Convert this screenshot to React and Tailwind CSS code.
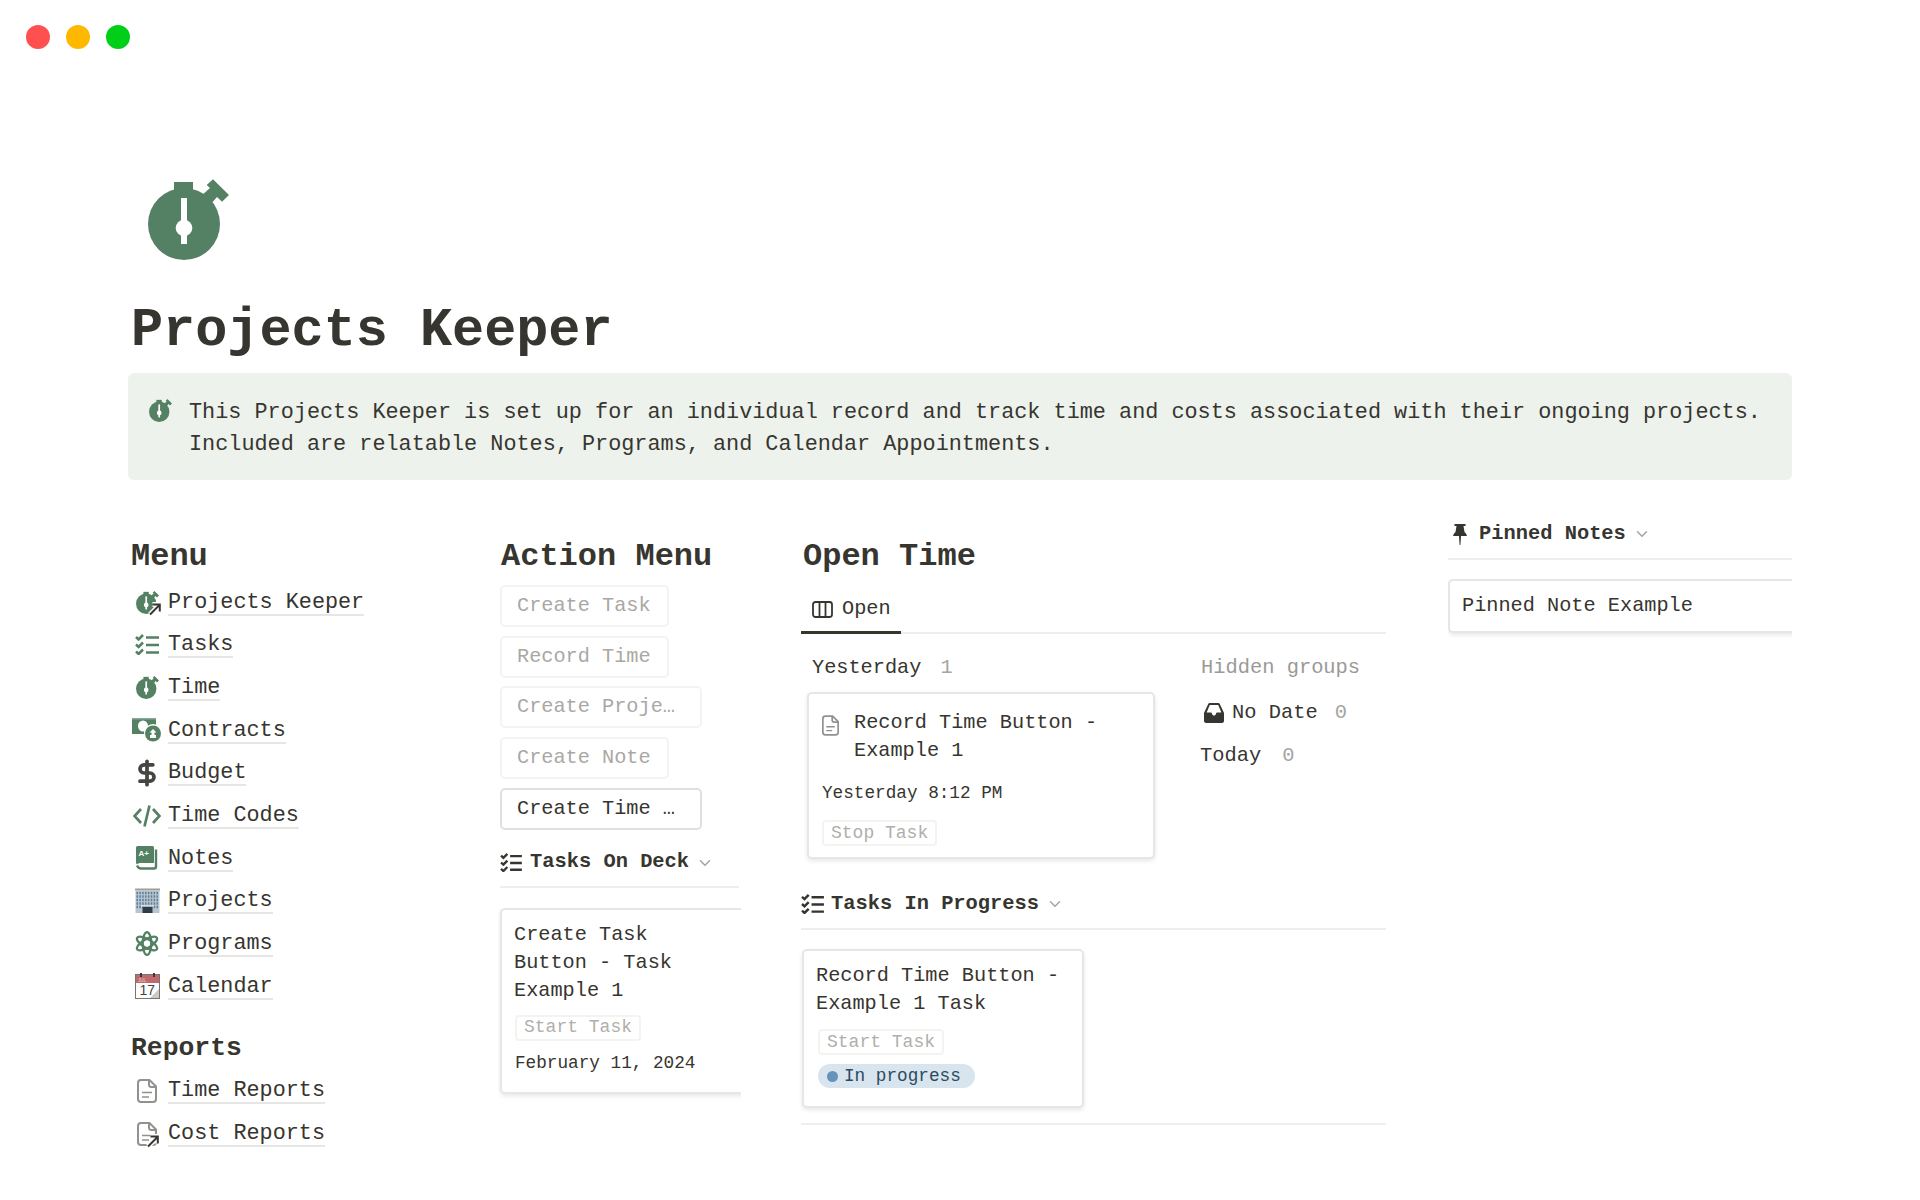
import React from "react";
import { ChevronDown, DollarSign } from "lucide-react";

const green = "#548164";

const Stopwatch = ({ size = 22, color = green, hole = "#fff" }) => (
  <svg width={size} height={size} viewBox="0 0 81 81" className="block">
    <circle cx="36" cy="45" r="36" fill={color} />
    <rect x="26" y="3" width="19" height="10" fill={color} />
    <polygon points="58.7,6 65,0.3 81,16 74,22.7 69,18 62,26 53,17 62,9" fill={color} />
    <rect x="33" y="19" width="6" height="46" fill={hole} />
    <circle cx="36" cy="49" r="8.3" fill={hole} />
  </svg>
);

const Arrow = ({ color = "#37352f" }) => (
  <svg width="14" height="14" viewBox="0 0 14 14" className="absolute right-[-3px] bottom-[-2px]">
    <path d="M2 12.5 L11.5 3 M4.5 2.5 H11.8 V9.5" fill="none" stroke="#fff" strokeWidth="5" />
    <path d="M2 12.5 L11.5 3 M4.5 2.5 H11.8 V9.5" fill="none" stroke={color} strokeWidth="2" />
  </svg>
);

const Checklist = ({ w = 24, h = 21, color = green }) => (
  <svg width={w} height={h} viewBox="0 0 24 21" fill="none" stroke={color} strokeWidth="2.6" className="block">
    <path d="M1 3 L3.6 5.4 L8 1 M1 10.5 L3.6 12.9 L8 8.5 M1 17.5 L3.6 19.9 L8 15.5" />
    <path d="M11 3.5 H24 M11 11 H24 M11 18.5 H24" />
  </svg>
);

const Money = () => (
  <svg width="30" height="24" viewBox="0 0 30 24" className="block">
    <rect x="0" y="0" width="24" height="16" fill={green} />
    <rect x="0" y="0" width="24" height="1.5" fill="#8aa897" />
    <ellipse cx="11" cy="8" rx="5" ry="5.5" fill="#fff" />
    <circle cx="21" cy="15" r="9" fill="#fff" />
    <circle cx="21" cy="15.5" r="8" fill={green} />
    <path d="M21 11 L24.5 14.5 H22.5 V17 H24 V20 H18 V17 H19.5 V14.5 H17.5 Z" fill="#fff" />
  </svg>
);

const CodeIcon = () => (
  <svg width="28" height="22" viewBox="0 0 28 22" fill="none" stroke={green} strokeWidth="2.7" className="block">
    <path d="M8 4 L1.5 11 L8 18 M20 4 L26.5 11 L20 18 M16.5 0.5 L11.5 21.5" />
  </svg>
);

const NotesIcon = () => (
  <svg width="22" height="24" viewBox="0 0 22 24" className="block">
    <path d="M1.5 0 H16.5 Q18 0 18 1.5 V17 H4 Q2 17 1 18.5 L0 17 V1.5 Q0 0 1.5 0 Z" fill={green} />
    <path d="M20 3.5 V20.5 Q20 22.5 18 22.5 H5 Q2.5 22.5 1 19.5" fill="none" stroke={green} strokeWidth="2.4" />
    <text x="2.6" y="9.5" fontSize="8" fontWeight="700" fill="#fff" fontFamily="Liberation Sans, sans-serif">A+</text>
  </svg>
);

const Building = () => {
  const rows = [0, 1, 2, 3, 4];
  const cols = [0, 1, 2, 3, 4, 5, 6, 7];
  return (
    <svg width="25" height="25" viewBox="0 0 25 25" className="block">
      <rect x="0" y="0.5" width="25" height="2" fill="#a09d93" />
      <rect x="0.5" y="2.5" width="24" height="22.5" fill="#b7c6d2" />
      {rows.map((r) =>
        cols.map((c) => <rect key={r + "-" + c} x={1.5 + c * 2.85} y={3.8 + r * 3.5} width="1.5" height="2.4" fill="#5f7d96" />)
      )}
      <rect x="7.5" y="18.5" width="10" height="6.5" fill="#2f3d49" />
      <rect x="6" y="17.3" width="13" height="1.3" fill="#e3e7ea" />
    </svg>
  );
};

const Atom = () => (
  <svg width="24" height="25" viewBox="0 0 24 25" fill="none" stroke={green} strokeWidth="2.3" className="block">
    <ellipse cx="12" cy="12.5" rx="4.3" ry="11.4" />
    <ellipse cx="12" cy="12.5" rx="4.3" ry="11.4" transform="rotate(60 12 12.5)" />
    <ellipse cx="12" cy="12.5" rx="4.3" ry="11.4" transform="rotate(-60 12 12.5)" />
  </svg>
);

const CalendarIcon = () => (
  <svg width="25" height="26" viewBox="0 0 25 26" className="block">
    <rect x="0.5" y="1.5" width="24" height="24" fill="#fff" stroke="#77756f" />
    <rect x="1" y="2" width="23" height="8" fill="#c06a6d" />
    <rect x="5" y="0" width="2" height="4" fill="#3b3a38" />
    <rect x="18" y="0" width="2" height="4" fill="#3b3a38" />
    <text x="3" y="8.8" fontSize="4.5" fill="#f0d4d4" fontFamily="Liberation Sans, sans-serif">JUL</text>
    <text x="4.5" y="22" fontSize="14" fill="#45444a" fontFamily="Liberation Sans, sans-serif">17</text>
    <path d="M24 16 L15 25 H24 Z" fill="#c9c9c6" />
  </svg>
);

const DocIcon = ({ w = 20, h = 24 }) => (
  <svg width={w} height={h} viewBox="0 0 20 24" fill="none" stroke="#91918e" strokeWidth="2" className="block">
    <path d="M12.5 1 H4 Q1 1 1 4 V20 Q1 23 4 23 H16 Q19 23 19 20 V7.5 Z" />
    <path d="M12 1 V5.5 Q12 8 14.5 8 H19" />
    <path d="M5 13.5 H15 M5 18 H12" strokeWidth="1.6" />
  </svg>
);

const Columns = () => (
  <svg width="21" height="17" viewBox="0 0 21 17" fill="none" stroke="#37352f" strokeWidth="1.8" className="block">
    <rect x="1" y="1" width="19" height="15" rx="2.5" />
    <path d="M7.5 1 V16 M13.5 1 V16" />
  </svg>
);

const Inbox = () => (
  <svg width="20" height="20" viewBox="0 0 19 19" className="block">
    <path d="M4 1 Q4.3 0 5.5 0 H13.5 Q14.7 0 15 1 L19 9.5 V17 Q19 19 17 19 H2 Q0 19 0 17 V9.5 Z" fill="#37352f" />
    <path d="M5.5 2 H13.5 L16.5 9 H12 Q11 12 9.5 12 Q8 12 7 9 H2.5 Z" fill="#fff" />
  </svg>
);

const Pin = () => (
  <svg width="14" height="21" viewBox="0 0 14 21" fill="#37352f" className="block">
    <path d="M1.5 0 H12.5 V2 H10.5 L11.5 8 Q13.5 9.5 14 12 H0 Q0.5 9.5 2.5 8 L3.5 2 H1.5 Z" />
    <path d="M6 12 H8 L7.4 21 H6.6 Z" />
  </svg>
);

const MenuLink = ({ icon, children }) => (
  <div className="flex h-[42.67px] items-center pl-[2px]">
    <div className="relative -mt-[2px] flex w-[38px] shrink-0 items-center justify-center pr-[4px]">{icon}</div>
    <span className="border-b-2 border-[#e6e6e4] text-[21.8px] leading-[23px]">{children}</span>
  </div>
);

const ActionButton = ({ children, wide, active }) => (
  <div
    className={
      active
        ? "flex h-[42px] w-[202px] items-center rounded-[5px] border-2 border-[#e0e0de] px-[15px] text-[20.25px] text-[#37352f]"
        : wide
          ? "flex h-[42px] w-[202px] items-center rounded-[5px] border-2 border-[#f3f3f2] px-[15px] text-[20.25px] text-[#a9a8a4]"
          : "flex h-[42px] w-[169px] items-center rounded-[5px] border-2 border-[#f3f3f2] px-[15px] text-[20.25px] text-[#a9a8a4]"
    }
  >
    {children}
  </div>
);

const Chip = ({ children }) => (
  <div className="flex h-[26px] w-fit items-center rounded-[4px] border-2 border-[#f3f3f2] px-[7px] text-[18px] text-[#b0afab]">
    {children}
  </div>
);

const SectionHeader = ({ icon, title, gap }) => (
  <div className="flex h-[30px] items-center font-bold">
    {icon}
    <span className={gap}>{title}</span>
    <ChevronDown size={18} color="#a5a4a0" className="ml-[7px]" />
  </div>
);

const cardClass = "rounded-[5px] border-2 border-[#e6e6e4] bg-white shadow-[0_2px_4px_rgba(15,15,15,0.1)]";

const App = () => {
  return (
    <div className="h-[1200px] w-[1920px] overflow-hidden bg-white text-[#37352f] font-['Liberation_Mono','DejaVu_Sans_Mono',monospace]">
      <div className="flex gap-[16px] pl-[26px] pt-[25px]">
        <div className="h-6 w-6 rounded-full bg-[#ff5050]"></div>
        <div className="h-6 w-6 rounded-full bg-[#ffb800]"></div>
        <div className="h-6 w-6 rounded-full bg-[#00cf1a]"></div>
      </div>

      <div className="px-[128px]">
        <div className="ml-[20px] mt-[130px]">
          <Stopwatch size={81} />
        </div>
        <h1 className="ml-[3px] mt-[39px] flex h-[64px] items-center text-[53.5px] font-bold leading-none">Projects Keeper</h1>

        <div className="mt-[10px] flex h-[107px] rounded-[6px] bg-[#edf2ec] pl-[21px] pt-[24px] text-[21.84px] leading-[32px]">
          <div className="mr-[17px] mt-[2px] shrink-0">
            <Stopwatch size={23} />
          </div>
          <p className="whitespace-pre-line">
            {"This Projects Keeper is set up for an individual record and track time and costs associated with their ongoing projects.\nIncluded are relatable Notes, Programs, and Calendar Appointments."}
          </p>
        </div>

        <div className="mt-[30px] flex">
          {/* menu */}
          <div className="w-[372px] shrink-0 pt-[22px]">
            <h2 className="ml-[3px] flex h-[50px] items-center text-[32px] font-bold">Menu</h2>
            <MenuLink icon={<div className="relative"><Stopwatch size={23} /><Arrow /></div>}>Projects Keeper</MenuLink>
            <MenuLink icon={<Checklist />}>Tasks</MenuLink>
            <MenuLink icon={<Stopwatch size={23} />}>Time</MenuLink>
            <MenuLink icon={<Money />}>Contracts</MenuLink>
            <MenuLink icon={<DollarSign size={28} strokeWidth={3.2} color="#454542" />}>Budget</MenuLink>
            <MenuLink icon={<CodeIcon />}>Time Codes</MenuLink>
            <MenuLink icon={<NotesIcon />}>Notes</MenuLink>
            <MenuLink icon={<Building />}>Projects</MenuLink>
            <MenuLink icon={<Atom />}>Programs</MenuLink>
            <MenuLink icon={<CalendarIcon />}>Calendar</MenuLink>
            <h2 className="ml-[3px] mt-[18px] flex h-[44px] items-center text-[26.4px] font-bold">Reports</h2>
            <MenuLink icon={<DocIcon />}>Time Reports</MenuLink>
            <MenuLink icon={<div className="relative"><DocIcon /><Arrow /></div>}>Cost Reports</MenuLink>
          </div>

          {/* action menu */}
          <div className="w-[301px] shrink-0 pt-[22px]">
            <h2 className="ml-[1px] flex h-[50px] items-center text-[32px] font-bold">Action Menu</h2>
            <div className="mt-[3px] flex flex-col gap-[8.7px]">
              <ActionButton>Create Task</ActionButton>
              <ActionButton>Record Time</ActionButton>
              <ActionButton wide>Create Proje…</ActionButton>
              <ActionButton>Create Note</ActionButton>
              <ActionButton active>Create Time …</ActionButton>
            </div>
            <div className="mt-[18px] w-[239px] border-b-2 border-[#eeeeed] pb-[8px] text-[20.4px]">
              <SectionHeader icon={<Checklist w={22} h={19} color="#37352f" />} title="Tasks On Deck" gap="ml-[8px]" />
            </div>
            <div className="-ml-[2px] mt-[20px] w-[243px] overflow-hidden pb-[8px] pl-[2px]">
              <div className={cardClass + " h-[186px] w-[270px] px-[12px] pt-[11px]"}>
                <p className="text-[20.25px] leading-[28px]">Create Task<br />Button - Task<br />Example 1</p>
                <div className="mt-[10px] ml-[1px]"><Chip>Start Task</Chip></div>
                <p className="ml-[1px] mt-[9px] text-[17.7px] leading-[26px]">February 11, 2024</p>
              </div>
            </div>
          </div>

          {/* open time */}
          <div className="w-[585px] shrink-0 pt-[22px]">
            <h2 className="ml-[2px] flex h-[50px] items-center text-[32px] font-bold">Open Time</h2>
            <div className="mt-[6px] flex h-[46px] border-b-2 border-[#eeeeed]">
              <div className="flex h-[46px] w-[100px] items-center gap-[9px] border-b-[3px] border-[#37352f] pl-[11px] text-[20.25px]">
                <Columns />
                Open
              </div>
            </div>
            <div className="flex">
              <div className="w-[399px] pl-[6px]">
                <div className="mt-[19px] flex h-[30px] items-center pl-[5px] text-[20.25px]">
                  Yesterday<span className="ml-[19px] text-[#a5a4a0]">1</span>
                </div>
                <div className={cardClass + " mt-[9px] h-[167px] w-[348px] px-[13px] pt-[15px]"}>
                  <div className="flex">
                    <div className="mt-[6px] w-[32px] shrink-0"><DocIcon w={17} h={21} /></div>
                    <p className="text-[20.25px] leading-[28px]">Record Time Button -<br />Example 1</p>
                  </div>
                  <p className="mt-[15px] text-[17.7px] leading-[26px]">Yesterday 8:12 PM</p>
                  <div className="mt-[14px]"><Chip>Stop Task</Chip></div>
                </div>
              </div>
              <div className="flex-1 pl-[1px] text-[20.4px]">
                <div className="mt-[19px] flex h-[30px] items-center text-[#9b9a97]">Hidden groups</div>
                <div className="mt-[15px] flex h-[30px] items-center pl-[3px]">
                  <Inbox /><span className="ml-[8px]">No Date</span><span className="ml-[17px] text-[#a5a4a0]">0</span>
                </div>
                <div className="-ml-[1px] mt-[13px] flex h-[30px] items-center">
                  Today<span className="ml-[21px] text-[#a5a4a0]">0</span>
                </div>
              </div>
            </div>
            <div className="mt-[30px] border-b-2 border-[#eeeeed] pb-[9px] text-[20.4px]">
              <SectionHeader icon={<Checklist w={23} h={20} color="#37352f" />} title="Tasks In Progress" gap="ml-[7px]" />
            </div>
            <div className={cardClass + " ml-[1px] mt-[19px] h-[159px] w-[282px] px-[12px] pt-[11px]"}>
              <p className="text-[20.25px] leading-[28px]">Record Time Button -<br />Example 1 Task</p>
              <div className="ml-[2px] mt-[11px]"><Chip>Start Task</Chip></div>
              <div className="ml-[2px] mt-[9px] flex h-[24px] w-[157px] items-center rounded-full bg-[#d8e5ee] pl-[9px] text-[17.7px] text-[#2c4a61]">
                <span className="mr-[6px] h-[11px] w-[11px] rounded-full bg-[#6593ba]"></span>
                In progress
              </div>
            </div>
            <div className="mt-[15px] border-b-2 border-[#eeeeed]"></div>
          </div>

          {/* pinned */}
          <div className="ml-[62px] w-[344px] shrink-0">
            <div className="mt-[9px] border-b-2 border-[#eeeeed] pb-[9px] pl-[5px] text-[20.4px]">
              <SectionHeader icon={<Pin />} title="Pinned Notes" gap="ml-[12px]" />
            </div>
            <div className="mt-[19px] w-[344px] overflow-hidden pb-[8px]">
              <div className={cardClass + " flex h-[54px] w-[370px] items-center px-[12px] text-[20.25px]"}>Pinned Note Example</div>
            </div>
          </div>
        </div>
      </div>
    </div>
  );
};

export default App;
